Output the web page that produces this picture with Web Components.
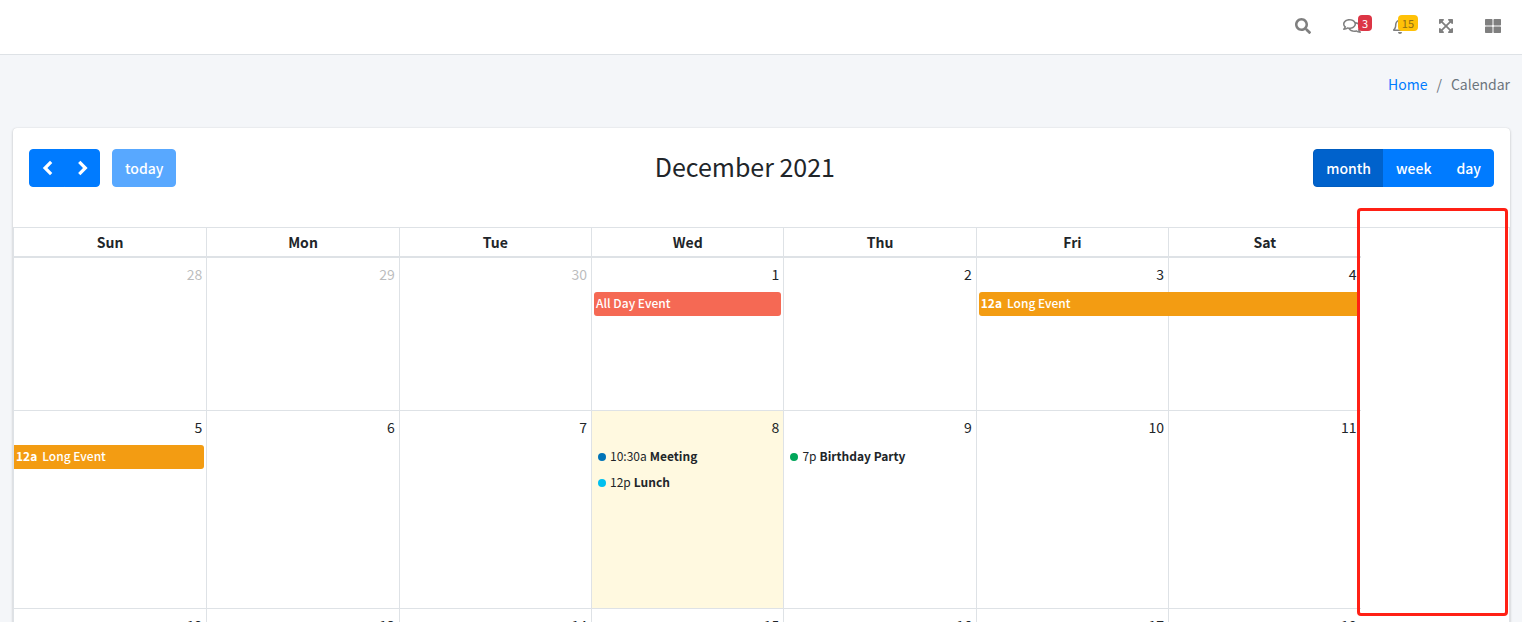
<!DOCTYPE html>
<html lang="en">
<head>
<meta charset="utf-8">
<meta name="viewport" content="width=device-width, initial-scale=1">
<title>Calendar</title>
<style>
  body {
    margin: 0;
    height: 100vh;
    overflow: hidden;
    background: #f4f6f9;
    color: #212529;
    font: 14px/24px "Noto Sans CJK SC", "Noto Sans", sans-serif;
  }
</style>
</head>
<body>
<calendar-page></calendar-page>

<script>
const ICONS = {
  search: ['0 0 512 512', 'M505 442.7L405.3 343c-4.5-4.5-10.6-7-17-7H372c27.6-35.3 44-79.7 44-128C416 93.1 322.9 0 208 0S0 93.1 0 208s93.1 208 208 208c48.3 0 92.7-16.4 128-44v16.3c0 6.4 2.5 12.5 7 17l99.7 99.7c9.4 9.4 24.6 9.4 33.9 0l28.3-28.3c9.4-9.4 9.4-24.6.1-34zM208 336c-70.7 0-128-57.2-128-128 0-70.7 57.2-128 128-128 70.7 0 128 57.2 128 128 0 70.7-57.2 128-128 128z'],
  comments: ['0 0 576 512', 'M532 386.2c27.5-27.1 44-61.1 44-98.2 0-80-76.5-146.1-176.2-157.9C368.3 72.5 294.3 32 208 32 93.1 32 0 103.6 0 192c0 37 16.5 71 44 98.2-15.3 30.7-37.3 54.5-37.7 54.9-6.3 6.7-8.1 16.5-4.4 25 3.6 8.5 12 14 21.2 14 53.5 0 96.7-20.2 125.2-38.8 9.2 2.1 18.7 3.7 28.4 4.9C208.1 407.6 281.8 448 368 448c20.8 0 40.8-2.4 59.8-6.8C456.3 459.7 499.4 480 553 480c9.2 0 17.5-5.5 21.2-14 3.6-8.5 1.9-18.3-4.4-25-.4-.3-22.5-24.1-37.8-54.8zm-392.8-92.3L122.1 305c-14.1 9.1-28.5 16.3-43.1 21.4 2.7-4.7 5.4-9.7 8-14.8l15.5-31.1L77.7 256C64.2 242.6 48 220.7 48 192c0-60.7 73.3-112 160-112s160 51.3 160 112-73.3 112-160 112c-16.5 0-33-1.9-49-5.6l-19.8-4.5zM498.3 352l-24.7 24.4 15.5 31.1c2.6 5.1 5.3 10.1 8 14.8-14.6-5.1-29-12.3-43.1-21.4l-17.1-11.1-19.9 4.6c-16 3.7-32.5 5.6-49 5.6-54 0-102.2-20.1-131.3-49.7C338 339.5 416 272.9 416 192c0-3.4-.4-6.7-.7-10C479.7 196.5 528 238.8 528 288c0 28.7-16.2 50.6-29.7 64z'],
  bell: ['0 0 448 512', 'M439.39 362.29c-19.32-20.76-55.47-51.99-55.47-154.29 0-77.7-54.48-139.9-127.94-155.16V32c0-17.67-14.32-32-31.98-32s-31.98 14.33-31.98 32v20.84C118.56 68.1 64.08 130.3 64.08 208c0 102.3-36.15 133.53-55.47 154.29-6 6.45-8.66 14.16-8.61 21.71.11 16.4 12.98 32 32.1 32h383.8c19.12 0 32-15.6 32.1-32 .05-7.55-2.61-15.27-8.61-21.71zM67.53 368c21.22-27.97 44.42-74.33 44.53-159.42 0-.2-.06-.38-.06-.58 0-61.86 50.14-112 112-112s112 50.14 112 112c0 .2-.06.38-.06.58.11 85.1 23.31 131.46 44.53 159.42H67.53zM224 512c35.32 0 63.97-28.65 63.97-64H160.03c0 35.35 28.65 64 63.97 64z'],
  expand: ['0 0 448 512', 'M448 344v112a23.94 23.94 0 0 1-24 24H312c-21.39 0-32.09-25.9-17-41l36.2-36.2L224 295.6 116.77 402.9 153 439c15.09 15.1 4.39 41-17 41H24a23.94 23.94 0 0 1-24-24V344c0-21.4 25.89-32.1 41-17l36.19 36.2L184.46 256 77.18 148.7 41 185c-15.1 15.1-41 4.4-41-17V56a23.94 23.94 0 0 1 24-24h112c21.39 0 32.09 25.9 17 41l-36.2 36.2L224 216.4l107.23-107.3L295 73c-15.09-15.1-4.39-41 17-41h112a23.94 23.94 0 0 1 24 24v112c0 21.4-25.89 32.1-41 17l-36.19-36.2L263.54 256l107.28 107.3L407 327.1c15.1-15.2 41-4.5 41 16.9z'],
  tiles: ['0 0 512 512', 'M24 32h192a24 24 0 0 1 24 24v160a24 24 0 0 1-24 24H24a24 24 0 0 1-24-24V56a24 24 0 0 1 24-24zM296 32h192a24 24 0 0 1 24 24v160a24 24 0 0 1-24 24H296a24 24 0 0 1-24-24V56a24 24 0 0 1 24-24zM24 272h192a24 24 0 0 1 24 24v160a24 24 0 0 1-24 24H24a24 24 0 0 1-24-24V296a24 24 0 0 1 24-24zM296 272h192a24 24 0 0 1 24 24v160a24 24 0 0 1-24 24H296a24 24 0 0 1-24-24V296a24 24 0 0 1 24-24z'],
  left: ['0 0 16 16', 'M11 0.800L13.300 3.100L8.400 8L13.300 12.900L11 15.200L3.800 8z'],
  right: ['0 0 16 16', 'M6.400 0.800L4.100 3.100L9 8L4.100 12.900L6.400 15.200L13.600 8z']
};

function define(name, html, setup) {
  const template = document.createElement('template');
  template.innerHTML = html;
  customElements.define(name, class extends HTMLElement {
    connectedCallback() {
      if (this.shadowRoot) return;
      this.attachShadow({ mode: 'open' }).append(template.content.cloneNode(true));
      if (setup) setup(this, this.shadowRoot);
    }
  });
}

define('app-icon', `
  <style>
    :host { display: inline-flex; }
    svg { display: block; height: 16px; fill: currentColor; }
  </style>
  <svg aria-hidden="true"><path/></svg>`, (el, root) => {
  const [box, path] = ICONS[el.getAttribute('name')];
  const svg = root.querySelector('svg');
  svg.setAttribute('viewBox', box);
  svg.style.width = box.split(' ')[2] / box.split(' ')[3] * 16 + 'px';
  svg.firstElementChild.setAttribute('d', path);
});

define('nav-item', `
  <style>
    :host { display: block; }
    a { position: relative; display: flex; align-items: center; height: 52px; padding: 0 16px; color: #7f7f7f; }
    .badge { position: absolute; top: 15px; right: 5px; padding: 0 4px; border-radius: 4px; font-size: 11px; line-height: 16px; }
    .badge:empty { display: none; }
    .danger { background: #dc3545; color: #fff; }
    .warning { background: #ffc107; color: #8f6f14; }
  </style>
  <a href="#"><slot></slot><span class="badge"></span></a>`, (el, root) => {
  root.querySelector('a').setAttribute('aria-label', el.getAttribute('label'));
  const badge = root.querySelector('.badge');
  badge.textContent = el.getAttribute('count') || '';
  if (el.hasAttribute('tone')) badge.classList.add(el.getAttribute('tone'));
});

define('top-nav', `
  <style>
    :host { display: block; }
    nav { display: flex; justify-content: flex-end; height: 54px; padding: 0 5px; background: #fff; border-bottom: 1px solid #dee2e6; }
  </style>
  <nav>
    <nav-item label="Search"><app-icon name="search"></app-icon></nav-item>
    <nav-item label="Messages" count="3" tone="danger"><app-icon name="comments"></app-icon></nav-item>
    <nav-item label="Notifications" count="15" tone="warning"><app-icon name="bell"></app-icon></nav-item>
    <nav-item label="Full screen"><app-icon name="expand"></app-icon></nav-item>
    <nav-item label="Apps"><app-icon name="tiles"></app-icon></nav-item>
  </nav>`);

define('bread-crumb', `
  <style>
    :host { display: block; }
    ol { display: flex; justify-content: flex-end; gap: 9px; margin: 0; padding: 17px 12px 32px; list-style: none; color: #6c757d; }
    a { color: #007bff; text-decoration: none; }
  </style>
  <ol><li><a href="#">Home</a></li><li aria-hidden="true">/</li><li>Calendar</li></ol>`);

define('tool-button', `
  <style>
    :host { display: block; }
    button {
      display: flex; align-items: center; justify-content: center;
      height: 38px; padding: 0 12px; border: 1px solid #007bff; border-radius: 4px;
      background: #007bff; color: #fff; font: inherit;
    }
    :host([active]) button { background: #0062cc; border-color: #005cbf; }
    :host([muted]) button { opacity: .65; }
    :host([icon]) button { padding: 0 9px; }
    :host([side="start"]) button { border-radius: 4px 0 0 4px; }
    :host([side="middle"]) button { border-radius: 0; }
    :host([side="end"]) button { border-radius: 0 4px 4px 0; }
  </style>
  <button type="button"><slot></slot></button>`, (el, root) => {
  if (el.hasAttribute('icon')) root.querySelector('button').setAttribute('aria-label', el.getAttribute('icon'));
});

define('calendar-toolbar', `
  <style>
    :host { display: flex; justify-content: space-between; align-items: flex-start; padding: 21px 16px 40px; font-weight: 500; }
    div { display: flex; }
    .start { gap: 12px; }
    tool-button + tool-button { margin-left: -1px; }
    h2 { margin: 0; font-size: 25px; line-height: 34px; font-weight: 400; }
  </style>
  <div class="start">
    <div>
      <tool-button side="start" icon="Previous month"><app-icon name="left"></app-icon></tool-button>
      <tool-button side="end" icon="Next month"><app-icon name="right"></app-icon></tool-button>
    </div>
    <tool-button muted>today</tool-button>
  </div>
  <h2>December 2021</h2>
  <div>
    <tool-button side="start" active>month</tool-button>
    <tool-button side="middle">week</tool-button>
    <tool-button side="end">day</tool-button>
  </div>`);

define('calendar-event', `
  <style>
    :host { display: block; margin: 0 2px 2px; font-size: 12px; line-height: 22px; }
    a { display: flex; align-items: center; height: 24px; padding: 0 2px; border-radius: 3px; color: #fff; text-decoration: none; white-space: nowrap; background: var(--tone); font-weight: 500; }
    time, span { padding-bottom: 2px; }
    time { margin-right: 5px; font-weight: 700; }
    time:empty { display: none; }
    :host([run="out"]) { position: relative; z-index: 1; width: calc(200% - 1px); }
    :host([run="out"]) a { border-radius: 3px 0 0 3px; }
    :host([run="in"]) { margin-left: 0; }
    :host([run="in"]) a { border-radius: 0 3px 3px 0; }
    :host([dot]) a { padding: 0 4px; background: none; color: #212529; font-weight: 700; }
    :host([dot]) a::before { content: ""; width: 8px; height: 8px; margin-right: 4px; border-radius: 4px; background: var(--tone); }
    :host([dot]) time { margin-right: 3px; font-weight: 400; }
  </style>
  <a href="#"><time></time><span><slot></slot></span></a>`, (el, root) => {
  root.querySelector('time').textContent = el.getAttribute('time') || '';
  el.style.setProperty('--tone', el.getAttribute('tone'));
});

define('month-grid', `
  <style>
    :host { display: block; border: 1px solid #dee2e6; border-bottom: 0; }
    table { width: calc(90% + 1px); table-layout: fixed; border-collapse: separate; border-spacing: 0; }
    th, td { box-sizing: border-box; padding: 0; border-bottom: 1px solid #dee2e6; vertical-align: top; }
    th + th, td + td { border-left: 1px solid #dee2e6; }
    th { height: 30px; border-bottom-width: 2px; line-height: 28px; font-weight: 700; }
    td { height: 198px; }
    .short td { height: 153px; }
    .number { display: block; padding: 0 4px 2px; text-align: right; line-height: 32px; color: inherit; text-decoration: none; }
    .other { opacity: .3; }
    .today { background: #fff9e0; }
  </style>
  <table><thead><tr></tr></thead><tbody></tbody></table>`, (el, root) => {
  const events = {
    1: '<calendar-event tone="#f56954">All Day Event</calendar-event>',
    3: '<calendar-event run="out" time="12a" tone="#f39c12">Long Event</calendar-event>',
    5: '<calendar-event run="in" time="12a" tone="#f39c12">Long Event</calendar-event>',
    8: '<calendar-event dot time="10:30a" tone="#0073b7">Meeting</calendar-event><calendar-event dot time="12p" tone="#00c0ef">Lunch</calendar-event>',
    9: '<calendar-event dot time="7p" tone="#00a65a">Birthday Party</calendar-event>'
  };
  root.querySelector('thead tr').innerHTML =
    ['Sun', 'Mon', 'Tue', 'Wed', 'Thu', 'Fri', 'Sat'].map(d => `<th scope="col">${d}</th>`).join('');
  const weeks = [[28, 29, 30, 1, 2, 3, 4], [5, 6, 7, 8, 9, 10, 11], [12, 13, 14, 15, 16, 17, 18]];
  root.querySelector('tbody').innerHTML = weeks.map((week, w) =>
    `<tr${w ? '' : ' class="short"'}>` + week.map(day => {
      const other = w === 0 && day > 7;
      return `<td${w === 1 && day === 8 ? ' class="today"' : ''}><a href="#" class="number${other ? ' other' : ''}">${day}</a>${other ? '' : events[day] || ''}</td>`;
    }).join('') + '</tr>').join('');
});

define('calendar-card', `
  <style>
    :host { display: block; position: relative; margin: 0 12px 0 13px; background: #fff; border-radius: 4px; box-shadow: 0 0 1px rgba(0,0,0,.125), 0 1px 3px rgba(0,0,0,.2); }
    .marker { position: absolute; z-index: 2; top: 80px; right: 2px; box-sizing: border-box; width: calc(10% + 1px); height: 408px; border: 3px solid #ff2015; border-radius: 4px; pointer-events: none; }
  </style>
  <calendar-toolbar></calendar-toolbar>
  <month-grid></month-grid>
  <div class="marker"></div>`);

define('calendar-page', `
  <style>:host { display: block; }</style>
  <top-nav></top-nav>
  <main>
    <bread-crumb></bread-crumb>
    <calendar-card></calendar-card>
  </main>`);
</script>
</body>
</html>
